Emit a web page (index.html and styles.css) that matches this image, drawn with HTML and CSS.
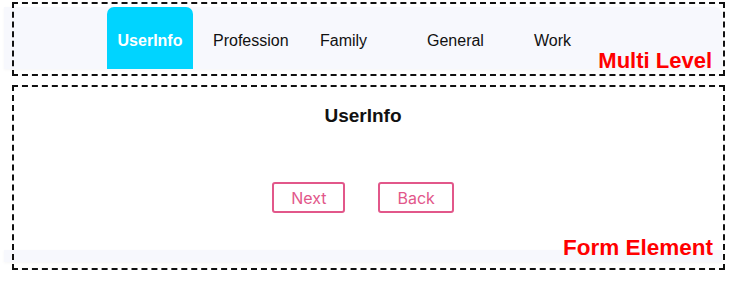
FILE: index.html
```html
<!DOCTYPE html>
<html lang="en">
<head>
    <meta charset="UTF-8">
    <meta name="viewport" content="width=device-width, initial-scale=1.0">
    <title>Multi Level Form</title>
    <link rel="stylesheet" href="styles.css">
</head>
<body>

<div class="demo demo-nav">
    <nav class="levels">
        <a class="level active">UserInfo</a>
        <a class="level">Profession</a>
        <a class="level">Family</a>
        <a class="level">General</a>
        <a class="level">Work</a>
    </nav>
    <span class="label label-nav">Multi Level</span>
</div>

<div class="demo demo-form">
    <h2 class="form-title">UserInfo</h2>
    <div class="actions">
        <button class="btn">Next</button>
        <button class="btn">Back</button>
    </div>
    <div class="form-footer"></div>
    <span class="label label-form">Form Element</span>
</div>

</body>
</html>
```

FILE: styles.css
```css
body {
    margin: 0;
    font-family: "Liberation Sans", Arial, sans-serif;
    background-color: #fff;
    color: #111;
}
.demo {
    position: relative;
}
/* dashed annotation frame */
.demo::after {
    content: "";
    position: absolute;
    top: 0;
    left: 12px;
    right: 5px;
    bottom: 0;
    border: 2px dashed #111;
    pointer-events: none;
}
.demo-nav {
    padding: 7px 8px 7px 4px;
}
.demo-nav::after {
    top: 2px;
}
.levels {
    display: flex;
    height: 62px;
    padding-left: 103px;
    background-color: #f7f8fd;
    border-radius: 0 8px 0 0;
    box-shadow: 0 1px 3px rgba(0, 0, 0, 0.04);
}
.level {
    display: flex;
    align-items: center;
    box-sizing: border-box;
    width: 107px;
    padding: 6px 0 0 20px;
    font-size: 16px;
    color: #111;
}
.level.active {
    width: 86px;
    padding-left: 0;
    justify-content: center;
    background-color: #00d4ff;
    border-radius: 7px 7px 0 0;
    color: #fff;
    font-weight: bold;
}
.label {
    position: absolute;
    right: 18px;
    font-size: 22px;
    line-height: 22px;
    font-weight: bold;
    color: #ff0000;
}
.label-nav {
    top: 50px;
}
.demo-form {
    margin-top: 9px;
    padding: 20px 8px 8px 4px;
}
.form-title {
    margin: 0;
    font-size: 19px;
    line-height: 22px;
    text-align: center;
}
.actions {
    display: flex;
    justify-content: center;
    gap: 33px;
    margin-top: 55px;
}
.btn {
    height: 31px;
    padding: 0 17px;
    border: 2px solid #e2578a;
    border-radius: 3px;
    background-color: #fff;
    color: #e2578a;
    font-family: Inter, "Liberation Sans", sans-serif;
    font-size: 16px;
}
.form-footer {
    height: 12px;
    margin-top: 37px;
    background-color: #f7f8fd;
    box-shadow: 0 1px 3px rgba(0, 0, 0, 0.04);
}
.label-form {
    bottom: 11px;
    right: 17px;
    font-size: 22.5px;
}
```
